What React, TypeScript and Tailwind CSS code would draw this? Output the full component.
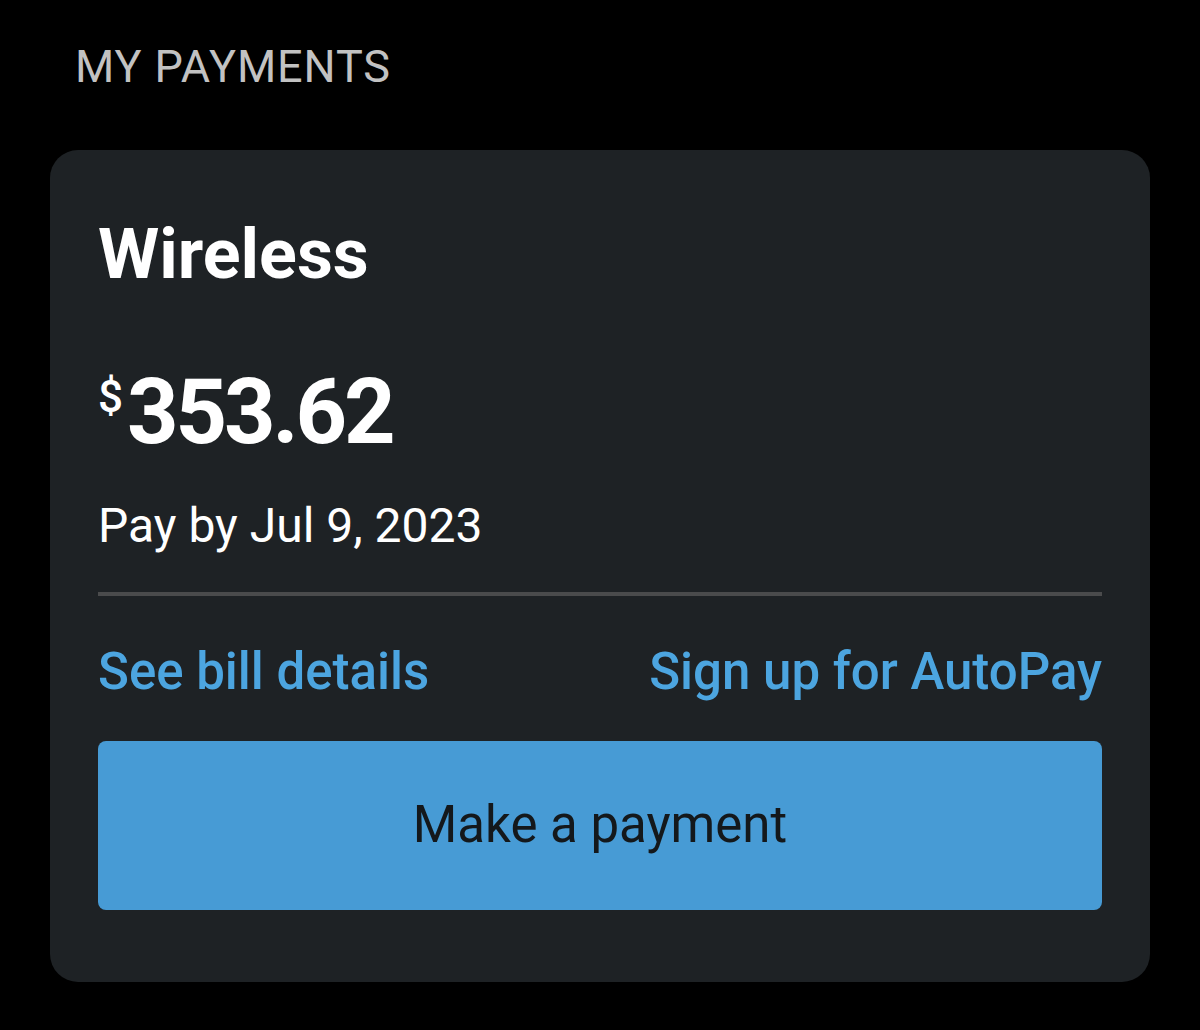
export default function App() {
  return (
    <div
      className="w-[1200px] h-[1030px] bg-black pt-[40px] px-[50px]"
      style={{ fontFamily: 'Roboto, "Noto Sans", sans-serif' }}
    >
      <h2 className="pl-[25px] text-[45px] leading-[54px] font-normal tracking-[0.02em] text-[#c2c2c2]">
        MY PAYMENTS
      </h2>

      <div className="mt-[56px] w-[1100px] h-[832px] rounded-[28px] bg-[#1e2225] px-[48px] pt-[64px]">
        <h3 className="text-[70px] leading-[80px] font-bold text-white">Wireless</h3>

        <div className="mt-[73px] flex items-start text-white">
          <span className="mt-[8px] mr-[4px] text-[44px] leading-[44px] font-medium">$</span>
          <span className="text-[90px] leading-[92px] font-bold tracking-[-0.035em]">353.62</span>
        </div>

        <p className="mt-[37px] text-[48px] leading-[60px] text-white">Pay by Jul 9, 2023</p>

        <div className="mt-[36px] h-[4px] bg-[#4a4b4c]" />

        <div className="mt-[44px] flex justify-between text-[51px] leading-[64px] font-medium text-[#4ca5e0]">
          <a>See bill details</a>
          <a>Sign up for AutoPay</a>
        </div>

        <button className="mt-[37px] w-full h-[169px] rounded-[8px] bg-[#479bd5] text-[51px] text-[#14181b]">
          Make a payment
        </button>
      </div>
    </div>
  );
}
